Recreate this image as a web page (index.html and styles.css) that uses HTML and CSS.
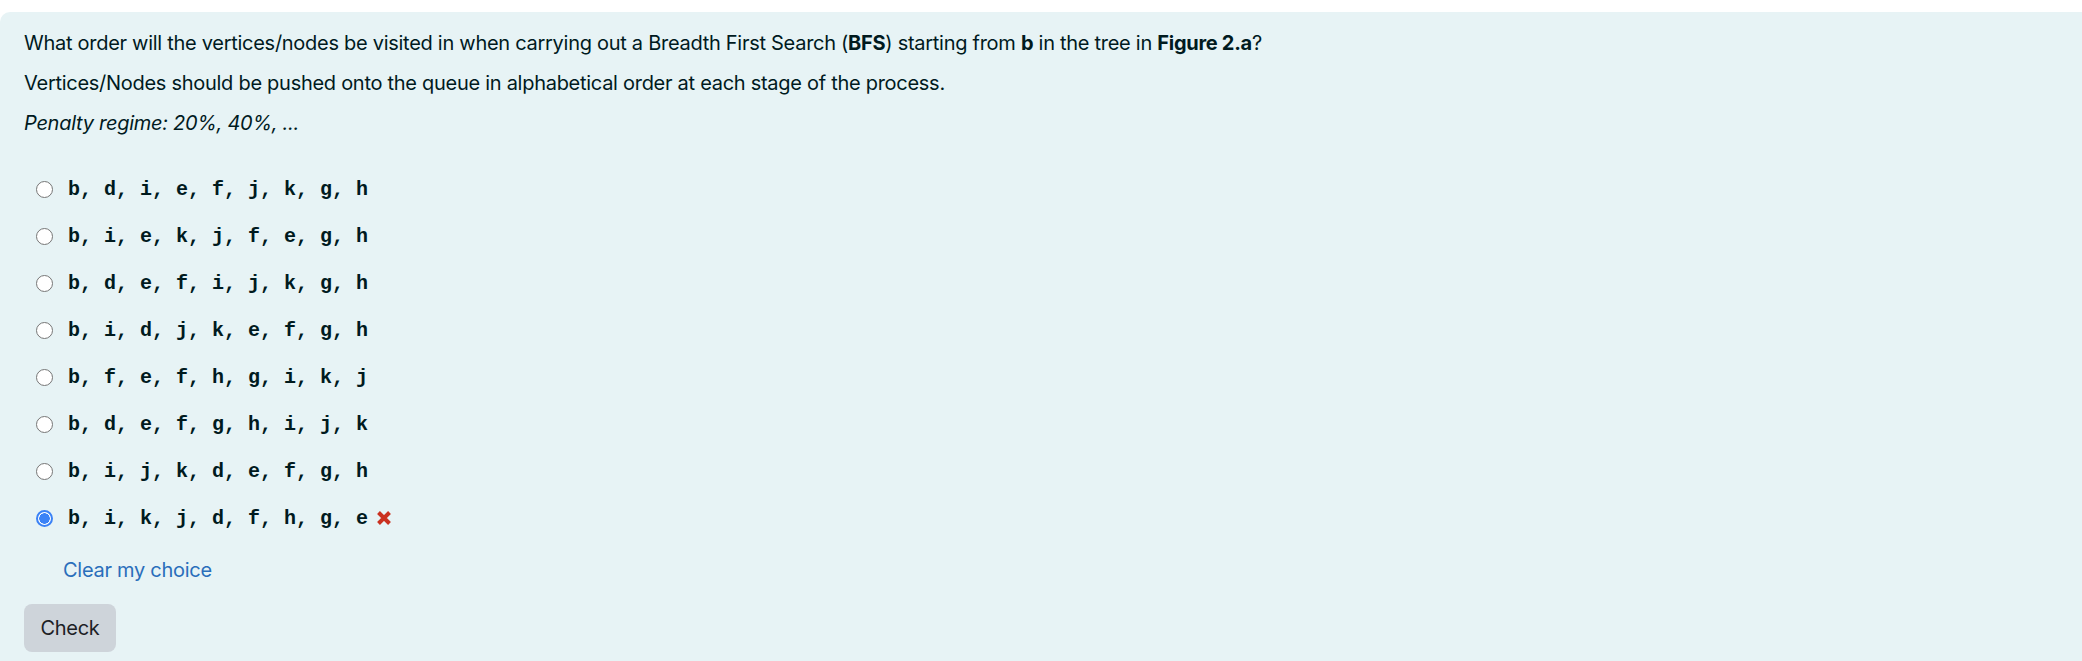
FILE: index.html
```html
<!DOCTYPE html>
<html lang="en">
<head>
<meta charset="utf-8">
<title>Question</title>
<link rel="stylesheet" href="styles.css">
</head>
<body>
<div class="formulation">
  <div class="qtext">
    <p>What order will the vertices/nodes be visited in when carrying out a Breadth First Search (<strong>BFS</strong>) starting from <strong>b</strong> in the tree in <strong>Figure 2.a</strong>?</p>
    <p>Vertices/Nodes should be pushed onto the queue in alphabetical order at each stage of the process.</p>
    <p class="penalty">Penalty regime: 20%, 40%, ...</p>
  </div>
  <div class="answers">
    <label class="choice"><span class="radio"></span><span class="opt">b, d, i, e, f, j, k, g, h</span></label>
    <label class="choice"><span class="radio"></span><span class="opt">b, i, e, k, j, f, e, g, h</span></label>
    <label class="choice"><span class="radio"></span><span class="opt">b, d, e, f, i, j, k, g, h</span></label>
    <label class="choice"><span class="radio"></span><span class="opt">b, i, d, j, k, e, f, g, h</span></label>
    <label class="choice"><span class="radio"></span><span class="opt">b, f, e, f, h, g, i, k, j</span></label>
    <label class="choice"><span class="radio"></span><span class="opt">b, d, e, f, g, h, i, j, k</span></label>
    <label class="choice"><span class="radio"></span><span class="opt">b, i, j, k, d, e, f, g, h</span></label>
    <label class="choice"><span class="radio checked"></span><span class="opt">b, i, k, j, d, f, h, g, e</span><svg class="wrong" width="16" height="16" viewBox="0 0 16 16"><path d="M2.5 2.5 L13.5 13.5 M13.5 2.5 L2.5 13.5" stroke="#ca3120" stroke-width="4" stroke-linecap="butt"/></svg></label>
  </div>
  <a class="clear" href="#">Clear my choice</a>
  <div class="actions"><button class="check" type="button">Check</button></div>
</div>
</body>
</html>
```
FILE: styles.css
```css
html, body {
  margin: 0;
  padding: 0;
  background: #ffffff;
}
body {
  font-family: Inter, "Noto Sans", sans-serif;
  color: #001a1e;
  font-size: 20px;
  line-height: 30px;
  letter-spacing: -0.28px;
}
.formulation {
  margin-top: 12px;
  background: #e7f3f5;
  border-top-left-radius: 10px;
  padding: 16px 24px 0 24px;
  min-height: 649px;
  box-sizing: border-box;
}
.qtext p {
  margin: 0 0 10px 0;
}
.qtext strong {
  font-weight: 700;
}
.penalty {
  font-style: italic;
}
.answers {
  margin-top: 28px;
  display: flex;
  flex-direction: column;
}
.choice {
  display: flex;
  align-items: center;
  height: 47px;
  padding-left: 12px;
}
.radio {
  width: 15px;
  height: 15px;
  border: 1px solid #767676;
  border-radius: 50%;
  background: #ffffff;
  flex: none;
}
.radio.checked {
  border: 2px solid #3b82f6;
  width: 13px;
  height: 13px;
  background: radial-gradient(circle, #3b82f6 0 5px, #ffffff 5.5px);
}
.opt {
  margin-left: 15px;
  font-family: "Liberation Mono", "Courier New", monospace;
  font-weight: 700;
  font-size: 20px;
  letter-spacing: 0;
}
.wrong {
  margin-left: 8px;
  margin-top: -2px;
}
.clear {
  display: block;
  margin-top: 13px;
  margin-left: 39px;
  color: #2a6ebb;
  text-decoration: none;
  line-height: 30px;
}
.actions {
  margin-top: 19px;
}
.check {
  font-family: Inter, "Noto Sans", sans-serif;
  font-size: 20px;
  line-height: 30px;
  letter-spacing: -0.28px;
  color: #1d2125;
  background: #ced4da;
  border: none;
  border-radius: 8px;
  padding: 9px 15px;
  width: 92px;
  height: 48px;
}
```
